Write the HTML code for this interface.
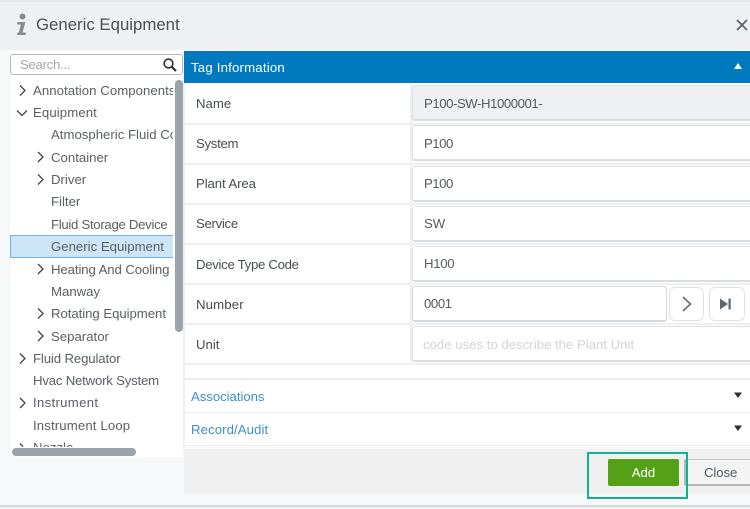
<!DOCTYPE html>
<html lang="en">
<head>
<meta charset="utf-8">
<title>Generic Equipment</title>
<style>
html,body{margin:0;padding:0;background:#f7f8fa}
body{width:750px;height:509px;overflow:hidden;position:relative;font-family:"Liberation Sans",sans-serif;color:#5a5f64}
#p{left:0;top:0;width:750px;height:509px;overflow:hidden;background:#f7f8fa;filter:blur(.3px)}
div,span,svg{position:absolute;box-sizing:border-box}
.t{white-space:nowrap;font-size:13.2px;line-height:20px;height:20px}
.l{left:196px;color:#474d52;font-size:13.2px}
.v{left:424px;color:#555b61;font-size:13.2px}
.i{left:412px;width:345px;height:36px;background:#fff;border:1px solid #dcdfe3;border-bottom:2px solid #d9dce0;border-radius:3px}
.r{left:184px;width:566px;height:2px;background:#eef0f2}
</style>
</head>
<body>
<div id="p">
<div style="left:0;top:0;width:750px;height:2px;background:#e4e6e8"></div>
<div style="left:0;top:2px;width:750px;height:48px;background:#eef0f4"></div>
<svg style="left:14px;top:12px" width="16" height="25" viewBox="0 0 16 25"><circle cx="8.500" cy="4.500" r="3" fill="#8a8a8a"/><path d="M3.500 10H11.500L8.500 20.500H11.500L11.800 23H3L3.600 20.500H4.800L6.800 12.500H3Z" fill="#8a8a8a"/></svg>
<div class="t" style="left:36px;top:15px;font-size:16.8px;color:#4c4f53">Generic Equipment</div>
<svg style="left:735px;top:18px" width="14" height="14" viewBox="0 0 14 14"><path d="M2 2L12 12M12 2L2 12" stroke="#5f6871" stroke-width="1.900" fill="none"/></svg>

<!-- tree panel -->
<div style="left:10px;top:50px;width:173px;height:407px;background:#fff"></div>
<div style="left:10px;top:54px;width:173px;height:21px;background:#fff;border:1px solid #b4b8bc;border-radius:3px"></div>
<div class="t" style="left:20px;top:55px;color:#a3a7ab;letter-spacing:-.3px">Search...</div>
<svg style="left:162px;top:57px" width="16" height="16" viewBox="0 0 16 16"><circle cx="6.500" cy="6.500" r="4.400" stroke="#2f3338" stroke-width="1.600" fill="none"/><path d="M9.800 9.800L14 14" stroke="#2f3338" stroke-width="2.200" fill="none"/></svg>

<div style="left:10px;top:235px;width:163px;height:23px;background:#cce6f8;border:1px solid #6db5ea;border-right:0"></div>

<div style="left:10px;top:80px;width:163px;height:367px;overflow:hidden">
<div class="t" style="left:23px;top:1px;letter-spacing:.05px">Annotation Components</div>
<div class="t" style="left:23px;top:23px;letter-spacing:.1px">Equipment</div>
<div class="t" style="left:41px;top:45px">Atmospheric Fluid Conditioner</div>
<div class="t" style="left:41px;top:68px">Container</div>
<div class="t" style="left:41px;top:90px">Driver</div>
<div class="t" style="left:41px;top:112px">Filter</div>
<div class="t" style="left:41px;top:135px;letter-spacing:-.3px">Fluid Storage Device</div>
<div class="t" style="left:41px;top:157px">Generic Equipment</div>
<div class="t" style="left:41px;top:180px;letter-spacing:-.1px">Heating And Cooling</div>
<div class="t" style="left:41px;top:202px">Manway</div>
<div class="t" style="left:41px;top:224px;letter-spacing:-.05px">Rotating Equipment</div>
<div class="t" style="left:41px;top:247px">Separator</div>
<div class="t" style="left:23px;top:269px;letter-spacing:-.13px">Fluid Regulator</div>
<div class="t" style="left:23px;top:291px;letter-spacing:-.2px">Hvac Network System</div>
<div class="t" style="left:23px;top:313px;letter-spacing:.3px">Instrument</div>
<div class="t" style="left:23px;top:336px;letter-spacing:.13px">Instrument Loop</div>
<div class="t" style="left:23px;top:358px">Nozzle</div>
</div>

<svg style="left:0;top:0" width="60" height="460" viewBox="0 0 60 460" fill="none" stroke="#3f4347" stroke-width="1.300">
<path d="M20 85.500L25 90.500L20 95.500"/>
<path d="M17 110.500L22 115.500L27 110.500"/>
<path d="M38 152L43 157L38 162"/>
<path d="M38 174.500L43 179.500L38 184.500"/>
<path d="M38 264L43 269L38 274"/>
<path d="M38 308.500L43 313.500L38 318.500"/>
<path d="M38 331L43 336L38 341"/>
<path d="M20 353.500L25 358.500L20 363.500"/>
<path d="M20 398L25 403L20 408"/>
<path d="M20 443.500L23 446.500"/>
</svg>

<div style="left:175px;top:80px;width:8px;height:252px;background:#98a3ab;border-radius:4px"></div>
<div style="left:12px;top:448px;width:124px;height:8px;background:#98a3ab;border-radius:4px"></div>

<!-- right panel -->
<div style="left:184px;top:50px;width:566px;height:397px;background:#fff"></div>
<div style="left:184px;top:51px;width:566px;height:32px;background:#0079bf"></div>
<div class="t" style="left:191px;top:58px;color:#fff;letter-spacing:.2px">Tag Information</div>
<svg style="left:733px;top:62px" width="10" height="8" viewBox="0 0 10 8"><path d="M1 7L5 1L9 7Z" fill="#fff"/></svg>

<div class="r" style="top:123px"></div>
<div class="r" style="top:163px"></div>
<div class="r" style="top:203px"></div>
<div class="r" style="top:243px"></div>
<div class="r" style="top:283px"></div>
<div class="r" style="top:323px"></div>
<div class="r" style="top:363px"></div>
<div style="left:410px;top:83px;width:2px;height:280px;background:#eef0f2"></div>
<div style="left:183px;top:83px;width:2px;height:364px;background:#eef0f2"></div>

<div class="t l" style="top:94px">Name</div>
<div class="t l" style="top:134px;letter-spacing:-.3px">System</div>
<div class="t l" style="top:174px;letter-spacing:-.1px">Plant Area</div>
<div class="t l" style="top:214px;letter-spacing:-.3px">Service</div>
<div class="t l" style="top:255px;letter-spacing:-.3px">Device Type Code</div>
<div class="t l" style="top:295px;letter-spacing:.15px">Number</div>
<div class="t l" style="top:335px">Unit</div>

<div class="i" style="top:85px;background:#eff0f4"></div>
<div class="i" style="top:125px"></div>
<div class="i" style="top:166px"></div>
<div class="i" style="top:206px"></div>
<div class="i" style="top:246px"></div>
<div class="i" style="top:286px;width:255px;border-color:#d5d8dc"></div>
<div class="i" style="top:326px"></div>

<div class="t v" style="top:94px;letter-spacing:-.45px">P100-SW-H1000001-</div>
<div class="t v" style="top:134px;letter-spacing:-.5px">P100</div>
<div class="t v" style="top:174px;letter-spacing:-.5px">P100</div>
<div class="t v" style="top:214px">SW</div>
<div class="t v" style="top:254px;letter-spacing:-.3px">H100</div>
<div class="t v" style="top:294px;letter-spacing:-.4px">0001</div>
<div class="t v" style="top:335px;left:423px;color:#d2d4d6">code uses to describe the Plant Unit</div>

<div style="left:669px;top:287px;width:35px;height:34px;background:#fff;border:1px solid #dfe2e5;border-radius:6px"></div>
<div style="left:709px;top:287px;width:36px;height:34px;background:#fff;border:1px solid #dfe2e5;border-radius:6px"></div>
<svg style="left:680px;top:295px" width="14" height="18" viewBox="0 0 14 18"><path d="M3 2L10.500 9L3 16" stroke="#646b72" stroke-width="1.600" fill="none"/></svg>
<svg style="left:719px;top:297px" width="14" height="14" viewBox="0 0 14 14"><path d="M1 1.500L9 7L1 12.500Z" fill="#5f666d"/><rect x="9.500" y="1.500" width="2.200" height="11" fill="#5f666d"/></svg>

<div style="left:184px;top:378px;width:566px;height:2px;background:#e9ebed"></div>
<div style="left:184px;top:412px;width:566px;height:1px;background:#e9ebed"></div>
<div style="left:184px;top:445px;width:566px;height:1px;background:#e9ebed"></div>
<div class="t" style="left:191px;top:387px;color:#3f8fcb;letter-spacing:-.05px">Associations</div>
<div class="t" style="left:191px;top:420px;color:#3f8fcb;letter-spacing:.08px">Record/Audit</div>
<svg style="left:733px;top:391px" width="10" height="8" viewBox="0 0 10 8"><path d="M1 1.500H9L5 7Z" fill="#2b2f33"/></svg>
<svg style="left:733px;top:424px" width="10" height="8" viewBox="0 0 10 8"><path d="M1 1.500H9L5 7Z" fill="#2b2f33"/></svg>

<!-- footer -->
<div style="left:184px;top:449px;width:566px;height:45px;background:#f0f0f0"></div>
<div style="left:0;top:505px;width:750px;height:2px;background:#d4d6d8"></div>
<div style="left:0;top:507px;width:750px;height:2px;background:#f0f1f2"></div>
<div style="left:608px;top:459px;width:71px;height:27px;background:#54a118;border-radius:2px"></div>
<div class="t" style="left:608px;top:463px;width:71px;text-align:center;color:#fff">Add</div>
<div style="left:684px;top:459px;width:80px;height:27px;background:#f4f4f4;border:1px solid #c4c6c8;border-left:2px solid #b5b7b9;border-bottom:2px solid #b5b7b9;border-radius:2px"></div>
<div class="t" style="left:704px;top:463px;color:#555b61;letter-spacing:-.1px">Close</div>
<div style="left:587px;top:452px;width:101px;height:47px;border:2px solid #15b094"></div>
</div>
</body>
</html>
